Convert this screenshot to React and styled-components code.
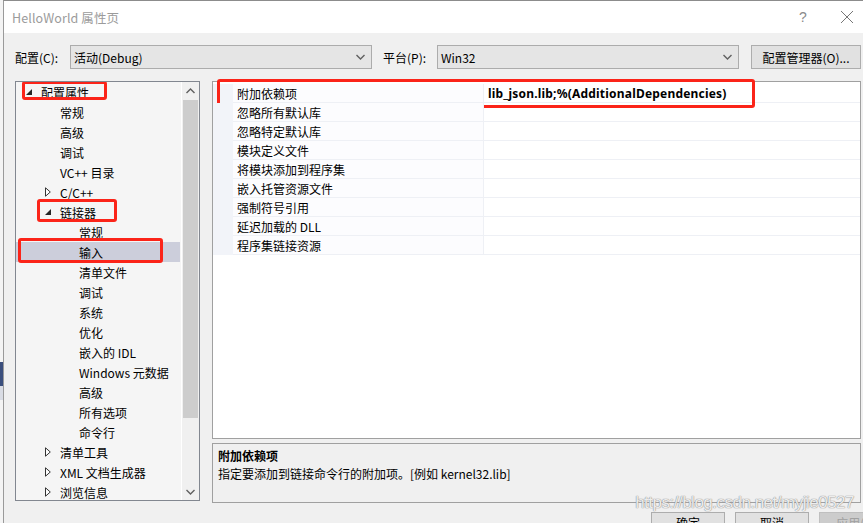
import React from 'react';
import styled, { createGlobalStyle } from 'styled-components';

const GlobalStyle = createGlobalStyle`
  html, body {
    margin: 0;
    padding: 0;
    background: #f0f0f0;
  }
  body {
    font-family: "Noto Sans CJK SC", "Noto Sans", sans-serif;
    font-size: 12px;
    color: #000;
  }
`;

const treeItems = [
  { label: '配置属性', level: 0, toggle: 'open', mark: { left: 6, top: -1, width: 85, height: 19 } },
  { label: '常规', level: 1 },
  { label: '高级', level: 1 },
  { label: '调试', level: 1 },
  { label: 'VC++ 目录', level: 1 },
  { label: 'C/C++', level: 1, toggle: 'closed' },
  { label: '链接器', level: 1, toggle: 'open', mark: { left: 21, top: -3, width: 80, height: 23 } },
  { label: '常规', level: 2 },
  { label: '输入', level: 2, selected: true, mark: { left: 2, top: -4, width: 145, height: 25 } },
  { label: '清单文件', level: 2 },
  { label: '调试', level: 2 },
  { label: '系统', level: 2 },
  { label: '优化', level: 2 },
  { label: '嵌入的 IDL', level: 2 },
  { label: 'Windows 元数据', level: 2 },
  { label: '高级', level: 2 },
  { label: '所有选项', level: 2 },
  { label: '命令行', level: 2 },
  { label: '清单工具', level: 1, toggle: 'closed' },
  { label: 'XML 文档生成器', level: 1, toggle: 'closed' },
  { label: '浏览信息', level: 1, toggle: 'closed' },
];

const properties = [
  { name: '附加依赖项', value: 'lib_json.lib;%(AdditionalDependencies)' },
  { name: '忽略所有默认库', value: '' },
  { name: '忽略特定默认库', value: '' },
  { name: '模块定义文件', value: '' },
  { name: '将模块添加到程序集', value: '' },
  { name: '嵌入托管资源文件', value: '' },
  { name: '强制符号引用', value: '' },
  { name: '延迟加载的 DLL', value: '' },
  { name: '程序集链接资源', value: '' },
];

const Chevron = ({ up }) => (
  <svg width="9" height="6" viewBox="0 0 9 6">
    <path
      d={up ? 'M0.5 5 L4.5 1 L8.5 5' : 'M0.5 1 L4.5 5 L8.5 1'}
      fill="none"
      stroke="#606060"
      strokeWidth="1.4"
    />
  </svg>
);

const Toggle = ({ type }) =>
  type === 'open' ? (
    <svg width="6" height="6" viewBox="0 0 6 6">
      <path d="M6 0 L6 6 L0 6 Z" fill="#262626" />
    </svg>
  ) : (
    <svg width="6" height="10" viewBox="0 0 6 10">
      <path d="M0.5 0.8 L5.3 5 L0.5 9.2 Z" fill="#fff" stroke="#333" strokeWidth="1" />
    </svg>
  );

const App = () => {
  return (
    <>
      <GlobalStyle />
      <Screen>
        <BackStrip />
        <Dialog>
          <TitleBar>
            <Title>HelloWorld 属性页</Title>
            <TitleButtons>
              <TitleBtn>?</TitleBtn>
              <TitleBtn>
                <svg width="14" height="14" viewBox="0 0 14 14">
                  <path d="M1 1 L13 13 M13 1 L1 13" stroke="#777" strokeWidth="1" />
                </svg>
              </TitleBtn>
            </TitleButtons>
          </TitleBar>

          <Body>
            <ConfigRow>
              <FieldLabel>配置(C):</FieldLabel>
              <Select>
                <span>活动(Debug)</span>
                <Chevron />
              </Select>
              <FieldLabel $gap>平台(P):</FieldLabel>
              <Select>
                <span>Win32</span>
                <Chevron />
              </Select>
              <ManagerButton>配置管理器(O)...</ManagerButton>
            </ConfigRow>

            <MainArea>
              <Tree>
                <TreeList>
                  {treeItems.map((item, i) => (
                    <TreeRow key={i} $level={item.level} $selected={item.selected}>
                      <ToggleSlot>{item.toggle && <Toggle type={item.toggle} />}</ToggleSlot>
                      <span>{item.label}</span>
                      {item.mark && (
                        <Mark
                          style={{
                            left: item.mark.left,
                            top: item.mark.top,
                            width: item.mark.width,
                            height: item.mark.height,
                          }}
                        />
                      )}
                    </TreeRow>
                  ))}
                </TreeList>
                <ScrollBar>
                  <ScrollArrow>
                    <Chevron up />
                  </ScrollArrow>
                  <ScrollTrack>
                    <ScrollThumb />
                  </ScrollTrack>
                  <ScrollArrow>
                    <Chevron />
                  </ScrollArrow>
                </ScrollBar>
              </Tree>

              <RightColumn>
                <Grid>
                  {properties.map((p, i) => (
                    <GridRow key={i}>
                      <Gutter />
                      <NameCell>{p.name}</NameCell>
                      <ValueCell>{p.value}</ValueCell>
                      {i === 0 && <RowMark />}
                    </GridRow>
                  ))}
                </Grid>
                <Description>
                  <DescTitle>附加依赖项</DescTitle>
                  <DescText>指定要添加到链接命令行的附加项。[例如 kernel32.lib]</DescText>
                  <Watermark>https://blog.csdn.net/myjie0527</Watermark>
                </Description>
                <ButtonRow>
                  <DialogButton>确定</DialogButton>
                  <DialogButton>取消</DialogButton>
                  <DialogButton $disabled>应用(A)</DialogButton>
                </ButtonRow>
              </RightColumn>
            </MainArea>
          </Body>
        </Dialog>
      </Screen>
    </>
  );
};

const Screen = styled.div`
  width: 863px;
  height: 523px;
  overflow: hidden;
  display: flex;
`;

const BackStrip = styled.div`
  width: 3px;
  flex-shrink: 0;
  background: linear-gradient(
    to bottom,
    #f4f4f4 0,
    #f4f4f4 362px,
    #3b4f7d 362px,
    #3b4f7d 386px,
    #d9dce4 386px,
    #d9dce4 400px,
    #f4f4f4 400px
  );
`;

const Dialog = styled.div`
  flex: 1;
  display: flex;
  flex-direction: column;
  border-left: 1px solid #9a9a9a;
  border-top: 1px solid #8c8c8c;
  background: #f0f0f0;
  min-height: 0;
`;

const TitleBar = styled.div`
  height: 32px;
  flex-shrink: 0;
  background: #fff;
  display: flex;
  align-items: center;
  justify-content: space-between;
  padding-left: 8px;
`;

const Title = styled.div`
  color: #9b9b9b;
  font-size: 12.5px;
  letter-spacing: 0.1px;
`;

const TitleButtons = styled.div`
  display: flex;
  align-items: center;
  gap: 24px;
  padding-right: 6px;
`;

const TitleBtn = styled.div`
  width: 20px;
  height: 20px;
  display: flex;
  align-items: center;
  justify-content: center;
  color: #8a8a8a;
  font-family: "Liberation Sans", sans-serif;
  font-size: 14px;
`;

const Body = styled.div`
  flex-shrink: 0;
  display: flex;
  flex-direction: column;
  padding: 12px 2px 0 11px;
`;

const ConfigRow = styled.div`
  display: flex;
  align-items: center;
  height: 24px;
  flex-shrink: 0;
`;

const FieldLabel = styled.div`
  width: ${(p) => (p.$gap ? '54px' : '55px')};
  padding-left: ${(p) => (p.$gap ? '11px' : '0')};
  flex-shrink: 0;
  white-space: nowrap;
`;

const Select = styled.div`
  width: 302px;
  height: 24px;
  box-sizing: border-box;
  border: 1px solid #acacac;
  background: #e5e5e5;
  display: flex;
  align-items: center;
  justify-content: space-between;
  padding: 0 6px 0 3px;
`;

const ManagerButton = styled.div`
  margin-left: 12px;
  width: 110px;
  height: 24px;
  box-sizing: border-box;
  border: 1px solid #adadad;
  background: #e1e1e1;
  display: flex;
  align-items: center;
  justify-content: center;
  white-space: nowrap;
`;

const MainArea = styled.div`
  flex-shrink: 0;
  display: flex;
  align-items: flex-start;
  gap: 12px;
  margin-top: 12px;
`;

const Tree = styled.div`
  width: 185px;
  height: 420px;
  flex-shrink: 0;
  box-sizing: border-box;
  border: 1px solid #828790;
  background: #f5f5f5;
  display: flex;
  overflow: hidden;
`;

const TreeList = styled.div`
  flex: 1;
  display: flex;
  flex-direction: column;
`;

const TreeRow = styled.div`
  position: relative;
  height: 20px;
  flex-shrink: 0;
  display: flex;
  align-items: center;
  padding-left: ${(p) => 10 + p.$level * 19}px;
  background: ${(p) => (p.$selected ? '#cccedb' : 'transparent')};
  margin-right: 1px;
  white-space: nowrap;
`;

const ToggleSlot = styled.span`
  width: 15px;
  display: flex;
  align-items: center;
`;

const Mark = styled.span`
  position: absolute;
  box-sizing: border-box;
  border: 3px solid #fb2419;
  border-radius: 3px;
  pointer-events: none;
`;

const ScrollBar = styled.div`
  width: 17px;
  display: flex;
  flex-direction: column;
  background: #f0f0f0;
  border-left: 1px solid #fff;
`;

const ScrollArrow = styled.div`
  height: 17px;
  display: flex;
  align-items: center;
  justify-content: center;
`;

const ScrollTrack = styled.div`
  flex: 1;
  display: flex;
  flex-direction: column;
`;

const ScrollThumb = styled.div`
  margin: 1px 1px 0 1px;
  height: 318px;
  background: #cdcdcd;
`;

const RightColumn = styled.div`
  flex: 1;
  display: flex;
  flex-direction: column;
`;

const Grid = styled.div`
  height: 358px;
  flex-shrink: 0;
  box-sizing: border-box;
  border: 1px solid #a0a0a0;
  background: #fff;
  padding-top: 2px;
  display: flex;
  flex-direction: column;
`;

const GridRow = styled.div`
  position: relative;
  height: 19px;
  flex-shrink: 0;
  display: flex;
`;

const Gutter = styled.div`
  width: 20px;
  background: #f2f4f9;
`;

const NameCell = styled.div`
  width: 246px;
  padding-left: 4px;
  display: flex;
  align-items: center;
  background: #fcfcfe;
  border-bottom: 1px solid #eef0f5;
  border-right: 1px solid #eef0f5;
  white-space: nowrap;
`;

const ValueCell = styled.div`
  flex: 1;
  padding-left: 4px;
  display: flex;
  align-items: center;
  font-weight: 700;
  font-family: "Noto Sans", "Noto Sans CJK SC", sans-serif;
  letter-spacing: 0.2px;
  border-bottom: 1px solid #eef0f5;
  white-space: nowrap;
`;

const RowMark = styled.span`
  position: absolute;
  left: 4px;
  top: -5px;
  width: 538px;
  height: 29px;
  box-sizing: border-box;
  border: 3px solid #fb2419;
  border-radius: 3px;
  pointer-events: none;
`;

const Description = styled.div`
  position: relative;
  margin-top: 4px;
  height: 60px;
  flex-shrink: 0;
  box-sizing: border-box;
  border: 1px solid #a0a0a0;
  padding: 3px 5px;
  display: flex;
  flex-direction: column;
`;

const DescTitle = styled.div`
  font-weight: 700;
  line-height: 18px;
`;

const DescText = styled.div`
  line-height: 18px;
`;

const Watermark = styled.span`
  position: absolute;
  right: 6px;
  bottom: -11px;
  font-family: "Liberation Sans", sans-serif;
  font-size: 17px;
  color: rgba(255, 255, 255, 0.85);
  text-shadow: 0 0 1px #8a8a8a, 0 0 1px #8a8a8a;
  letter-spacing: -0.5px;
  white-space: nowrap;
`;

const ButtonRow = styled.div`
  margin-top: 9px;
  display: flex;
  justify-content: flex-end;
  gap: 10px;
  margin-right: -32px;
`;

const DialogButton = styled.div`
  width: 74px;
  height: 22px;
  flex-shrink: 0;
  box-sizing: border-box;
  border: 1px solid ${(p) => (p.$disabled ? '#bfbfbf' : '#adadad')};
  background: ${(p) => (p.$disabled ? '#cccccc' : '#e1e1e1')};
  color: ${(p) => (p.$disabled ? '#a0a0a0' : '#000')};
  display: flex;
  justify-content: center;
  padding-top: 1px;
`;

export default App;
